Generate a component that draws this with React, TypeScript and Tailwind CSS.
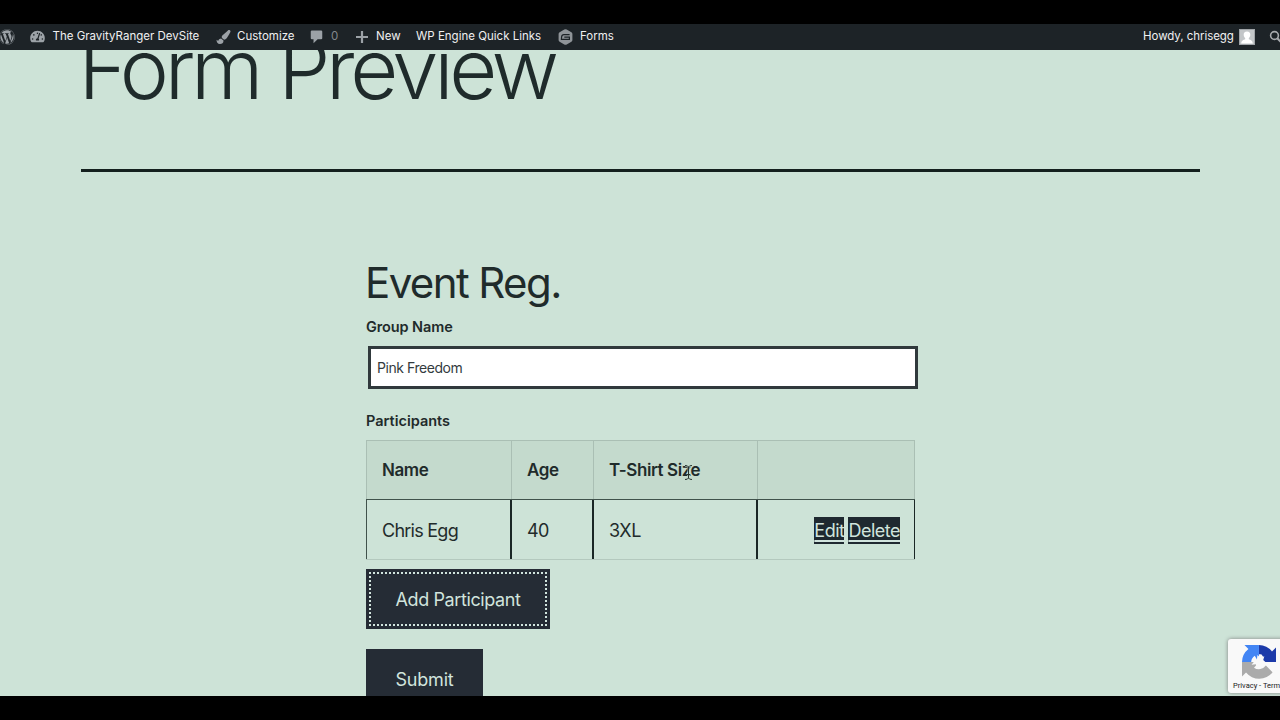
import { FaWordpress, FaTachometerAlt, FaPaintBrush } from 'react-icons/fa';

const COLUMNS = ['Name', 'Age', 'T-Shirt Size', ''];

const PARTICIPANTS = [{ name: 'Chris Egg', age: 40, size: '3XL' }];

function CommentIcon() {
  return (
    <svg viewBox="0 0 14 15" className="w-[13px] h-[14px] shrink-0" fill="#9ca2a7">
      <path d="M2 0.5h10a1.2 1.2 0 0 1 1.2 1.2v7.1A1.2 1.2 0 0 1 12 10H8.2L3.8 14.3V10H2A1.2 1.2 0 0 1 .8 8.8V1.7A1.2 1.2 0 0 1 2 .5z" />
    </svg>
  );
}

function PlusIcon() {
  return (
    <svg viewBox="0 0 12 12" className="w-3 h-3 shrink-0" fill="#9ca2a7">
      <path d="M4.9 0h2.2v4.9H12v2.2H7.1V12H4.9V7.1H0V4.9h4.9z" />
    </svg>
  );
}

function GravityFormsIcon() {
  return (
    <svg viewBox="0 0 15 16" className="w-[15px] h-4 shrink-0">
      <path d="M6.3.6a2.4 2.4 0 0 1 2.4 0l4.7 2.7a2 2 0 0 1 1 1.8v5.8a2 2 0 0 1-1 1.8l-4.7 2.7a2.4 2.4 0 0 1-2.4 0l-4.7-2.7a2 2 0 0 1-1-1.8V5.1a2 2 0 0 1 1-1.8z" fill="#8f9498" />
      <path d="M11.6 5.7H5.800Q3.900 5.700 3.600 7.900L3.400 10.300H11.400V8.100H6.300" fill="none" stroke="#1d2327" strokeWidth="1.2" />
    </svg>
  );
}

function Avatar() {
  return (
    <svg viewBox="0 0 16 16" className="w-4 h-4 shrink-0">
      <rect width="16" height="16" fill="#c3c6c8" />
      <path d="M8 2.5c2.3 0 3.5 1.5 3.3 3.5-.1 1.4-.7 2.5-1.5 3.2v1.1c1.8.6 3.700 1.200 4 4.200H2.200c.3-3 2.200-3.600 4-4.200V9.200C5.400 8.500 4.800 7.400 4.700 6 4.500 4 5.700 2.500 8 2.500z" fill="#fff" />
      <rect x=".5" y=".5" width="15" height="15" fill="none" stroke="#a0a4a8" />
    </svg>
  );
}

function SearchIcon() {
  return (
    <svg viewBox="0 0 14 14" className="w-3.5 h-3.5 shrink-0" fill="none" stroke="#a7aaad">
      <circle cx="5.5" cy="5.5" r="3.9" strokeWidth="1.6" />
      <path d="M8.3 8.3l4 4" strokeWidth="2.2" />
    </svg>
  );
}

function AdminBar() {
  return (
    <header className="flex h-[26px] items-center overflow-hidden bg-[#1d2327] pb-[1px] text-[11.5px] leading-none text-[#f0f0f1] whitespace-nowrap">
      <FaWordpress className="-ml-[1px] w-4 h-4 shrink-0 text-[#9ca2a7]" />
      <div className="ml-[15px] flex w-[186px] items-center gap-[7.5px]">
        <FaTachometerAlt className="mb-[1px] w-[15px] h-[13px] shrink-0 text-[#9ca2a7]" />
        <span className="pt-px">The GravityRanger DevSite</span>
      </div>
      <div className="flex w-[94px] items-center gap-[6px]">
        <FaPaintBrush className="w-[15px] h-[14px] shrink-0 text-[#9ca2a7]" />
        <span className="pt-px">Customize</span>
      </div>
      <div className="flex w-[46px] items-center gap-[8px]">
        <CommentIcon />
        <span className="pt-px text-[#82878c]">0</span>
      </div>
      <div className="flex w-[60px] items-center gap-[8px]">
        <PlusIcon />
        <span className="pt-px">New</span>
      </div>
      <span className="w-[142px] pt-px">WP Engine Quick Links</span>
      <div className="flex items-center gap-[7px]">
        <GravityFormsIcon />
        <span className="pt-px">Forms</span>
      </div>
      <div className="ml-auto flex w-[137px] shrink-0 items-center">
        <span className="w-[96px] shrink-0 pt-px tracking-[-0.05px]">Howdy, chrisegg</span>
        <Avatar />
        <span className="ml-[14px] shrink-0">
          <SearchIcon />
        </span>
      </div>
    </header>
  );
}

function ParticipantsTable() {
  return (
    <div className="w-[549px] border-b border-[#b4c9be]">
      <div className="grid h-[59px] grid-cols-[145px_82px_164px_158px] border-t border-[#aabfb4] bg-[#c4dacd] text-[17px] tracking-[-0.42px] font-semibold">
        {COLUMNS.map((label, i) => (
          <div
            key={i}
            className="flex items-center border-l border-[#aabfb4] pt-[2px] pl-[15px] last:border-r"
          >
            {label}
          </div>
        ))}
      </div>
      {PARTICIPANTS.map(p => (
        <div
          key={p.name}
          className="grid h-[60px] grid-cols-[144px_82px_164px_159px] border-t border-[#40524b] text-[18px]"
        >
          <div className="flex items-center border-l border-[#40524b] pt-[2px] pl-[15px] tracking-[-0.75px]">{p.name}</div>
          <div className="flex items-center border-l-2 border-[#1a2725] pt-[2px] pl-[15px] tracking-[-0.7px]">{p.age}</div>
          <div className="flex items-center border-l-2 border-[#1a2725] pt-[2px] pl-[15px] tracking-[-0.4px]">{p.size}</div>
          <div className="flex items-center justify-end gap-[4px] border-l-2 border-r border-[#1a2725] pt-px pr-[14px] tracking-[-0.5px] text-[#d1e4dd]">
            <a href="#" className="bg-[#1f2930] leading-[27px] underline decoration-[1.5px] underline-offset-[3px]">Edit</a>
            <a href="#" className="bg-[#1f2930] leading-[27px] underline decoration-[1.5px] underline-offset-[3px]">Delete</a>
          </div>
        </div>
      ))}
    </div>
  );
}

function TextCursor() {
  return (
    <svg viewBox="0 0 9 17" className="absolute left-[684px] top-[464px] w-[9px] h-[17px]" fill="none">
      <path d="M1 1.5Q4 1.5 4.5 3Q5 1.5 8 1.5M4.5 3V14M1 15.5Q4 15.5 4.5 14Q5 15.5 8 15.5M3 10.5H6" stroke="#c4dacd" strokeWidth="1.8" />
      <path d="M1 1.5Q4 1.5 4.5 3Q5 1.5 8 1.5M4.5 3V14M1 15.5Q4 15.5 4.5 14Q5 15.5 8 15.5M3 10.5H6" stroke="#26332f" strokeWidth="1" />
    </svg>
  );
}

function RecaptchaBadge() {
  return (
    <div className="absolute left-[1228px] top-[639px] flex h-[54px] w-[61px] flex-col items-center rounded-[3px] bg-[#f9f9f9] pt-[5.5px] shadow-[0_0_4px_#808080]">
      <svg viewBox="0 0 64 64" className="h-[34px] w-[34px] shrink-0">
        <path d="M64 31.950V4.600l-7.560 7.560A31.950 31.950 0 0 0 31.900 0v17.200c1.800 0 3.500.3 5 .9l3.200 4.500L30 31.950z" fill="#1c3aa9" />
        <path d="M31.900 0H4.600l7.500 7.600A31.950 31.950 0 0 0 0 32h17.300A15 15 0 0 1 24 20.300L32 34z" fill="#4285f4" />
        <path d="M0 32v27.400l7.600-7.600A31.950 31.950 0 0 0 57.500 51.300L45 38.800A16.400 16.400 0 0 1 22.600 42.700L32 32z" fill="#ababab" />
        <path d="M22 26l6 2 1-9 6 5 7-3-2 7 5 5-6 1 1 7-7-3-5 6-2-8-8 1 5-6z" fill="#f9f9f9" />
      </svg>
      <div className="mt-[2px] text-[7.5px] leading-[9px] text-[#222] whitespace-nowrap font-[Roboto,sans-serif]">
        Privacy - Terms
      </div>
    </div>
  );
}

export default function App() {
  return (
    <div className="relative h-[720px] w-[1280px] overflow-hidden bg-black py-6 font-[Inter,sans-serif]">
      <AdminBar />
      <main className="h-[646px] overflow-hidden bg-[#cde3d7] text-[#1f2b2b]">
        <div className="mx-auto -mt-[29px] h-[151px] w-[1119px] border-b-[3px] border-[#14201e]">
          <h1 className="-ml-[2px] text-[83px] font-light leading-[97px] tracking-[-4.3px]">Form Preview</h1>
        </div>
        <form className="ml-[366px] mt-[85px] w-[552px]">
          <h2 className="-ml-px text-[42px] leading-[52px] tracking-[-1.6px]">Event Reg.</h2>
          <label className="mt-[8px] block text-[14.5px] font-semibold leading-5 tracking-[-0.1px]">Group Name</label>
          <input
            type="text"
            defaultValue="Pink Freedom"
            className="ml-[2px] mt-[9px] block h-[43px] w-[550px] border-[3px] border-[#30393c] bg-white px-[6px] text-[14px] tracking-[-0.45px] text-[#333b3e]"
          />
          <label className="mt-[22px] mb-[9px] block text-[14.5px] font-semibold leading-5">Participants</label>
          <ParticipantsTable />
          <button type="button" className="mt-[9px] block h-[60px] w-[184px] bg-[#252c35] p-[3px] text-[18px] tracking-[-0.4px] text-[#d1e4dd]">
            <span className="flex h-full items-center justify-center border-2 border-dotted border-[#d1e4dd] whitespace-nowrap">
              Add Participant
            </span>
          </button>
          <button type="button" className="mt-[20px] block h-[60px] w-[117px] bg-[#252c35] text-[18px] tracking-[-0.2px] text-[#d1e4dd]">
            Submit
          </button>
        </form>
      </main>
      <TextCursor />
      <RecaptchaBadge />
    </div>
  );
}
